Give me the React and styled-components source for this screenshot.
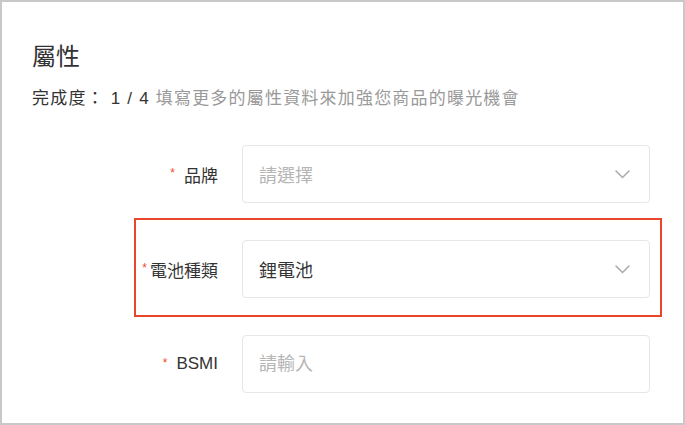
import React from 'react';
import styled, { createGlobalStyle } from 'styled-components';

const GlobalStyle = createGlobalStyle`
  html, body {
    margin: 0;
    padding: 0;
    background: #fff;
  }
  * {
    box-sizing: border-box;
  }
`;

const Frame = styled.div`
  width: 685px;
  height: 425px;
  border: 2px solid #c8c8c8;
  background: #fff;
  padding: 39px 30px 0 30px;
  font-family: "Liberation Sans", "Noto Sans CJK TC", sans-serif;
  color: #333;
  overflow: hidden;
`;

const Title = styled.h2`
  margin: 0;
  font-size: 24px;
  line-height: 32px;
  font-weight: 400;
  color: #333;
`;

const Progress = styled.div`
  margin-top: 14px;
  font-size: 17px;
  line-height: 24px;
  color: #333;
  letter-spacing: 1.2px;
`;

const Hint = styled.span`
  color: #999;
`;

const Form = styled.div`
  margin-top: 34px;
  display: flex;
  flex-direction: column;
  gap: 37px;
`;

const Row = styled.div`
  position: relative;
  display: grid;
  grid-template-columns: 188px 408px;
  column-gap: 22px;
  align-items: center;

  ${({ $highlight }) =>
    $highlight &&
    `
    &::before {
      content: '';
      position: absolute;
      left: 102px;
      right: -9px;
      top: -22px;
      bottom: -19px;
      border: 2px solid #e8472c;
      pointer-events: none;
    }
  `}
`;

const Label = styled.label`
  display: flex;
  justify-content: flex-end;
  align-items: center;
  font-size: 17px;
  color: #333;
  white-space: nowrap;
  padding-right: 2px;
`;

const Required = styled.span`
  color: #ee4d2d;
  font-size: 12px;
  margin-right: ${({ $tight }) => ($tight ? '3px' : '9px')};
  margin-top: -2px;
`;

const Field = styled.div`
  height: 58px;
  border: 1px solid #e6e6e6;
  border-radius: 4px;
  background: #fff;
  display: flex;
  align-items: center;
  justify-content: space-between;
  padding: 0 19px 0 16px;
  font-size: 18px;
  color: ${({ $empty }) => ($empty ? '#b5b5b5' : '#333')};
`;

const TextInput = styled.input`
  width: 100%;
  height: 58px;
  border: 1px solid #e6e6e6;
  border-radius: 4px;
  padding: 0 16px;
  font-family: inherit;
  font-size: 18px;
  color: #333;
  outline: none;

  &::placeholder {
    color: #b5b5b5;
  }
`;

const Chevron = () => (
  <svg width="15" height="9" viewBox="0 0 15 9" fill="none">
    <path d="M1 1l6.5 6.5L14 1" stroke="#aaa" strokeWidth="1.5" strokeLinecap="round" strokeLinejoin="round" />
  </svg>
);

const App = () => {
  return (
    <>
      <GlobalStyle />
      <Frame>
        <Title>屬性</Title>
        <Progress>
          完成度： 1 / 4 <Hint>填寫更多的屬性資料來加強您商品的曝光機會</Hint>
        </Progress>
        <Form>
          <Row>
            <Label>
              <Required>*</Required>品牌
            </Label>
            <Field $empty>
              請選擇
              <Chevron />
            </Field>
          </Row>
          <Row $highlight>
            <Label>
              <Required $tight>*</Required>電池種類
            </Label>
            <Field>
              鋰電池
              <Chevron />
            </Field>
          </Row>
          <Row>
            <Label>
              <Required>*</Required>BSMI
            </Label>
            <TextInput placeholder="請輸入" />
          </Row>
        </Form>
      </Frame>
    </>
  );
};

export default App;
